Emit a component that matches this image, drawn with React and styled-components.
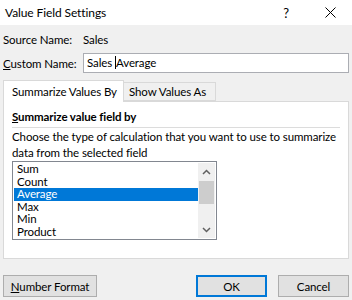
import React from 'react';
import styled, { createGlobalStyle } from 'styled-components';

const GlobalStyle = createGlobalStyle`
	html, body {
		margin: 0;
		padding: 0;
		background: #f0f0f0;
	}
	body {
		font-family: Lato, "Liberation Sans", sans-serif;
		font-size: 11.5px;
		letter-spacing: -0.1px;
		color: #000;
	}
`;

const Dialog = styled.div`
	width: 352px;
	height: 300px;
	background: #f0f0f0;
	display: flex;
	flex-direction: column;
	overflow: hidden;
`;

const TitleBar = styled.div`
	height: 25px;
	background: #fff;
	display: flex;
	align-items: center;
	padding-left: 5px;
`;

const Title = styled.div`
	flex: 1;
	font-size: 12px;
`;

const TitleButton = styled.div`
	width: 44px;
	height: 25px;
	display: flex;
	align-items: center;
	justify-content: center;
	font-size: 13px;
`;

const Body = styled.div`
	padding: 6px 3px 0 3px;
	display: flex;
	flex-direction: column;
`;

const Row = styled.div`
	display: flex;
	align-items: center;
	height: ${p => p.h || 20}px;
	margin-bottom: ${p => p.mb || 0}px;
	white-space: nowrap;
`;

const Label = styled.span`
	width: 80px;
	flex-shrink: 0;
`;

const U = styled.span`
	text-decoration: underline;
	text-underline-offset: 1px;
`;

const TextBox = styled.div`
	flex: 1;
	height: 20px;
	line-height: 18px;
	box-sizing: border-box;
	border: 1px solid #abadb3;
	background: #fff;
	padding-left: 3px;
`;

const Caret = styled.span`
	display: inline-block;
	width: 1px;
	height: 13px;
	background: #000;
	vertical-align: -2px;
`;

const Tabs = styled.div`
	display: flex;
	align-items: flex-end;
	height: 22px;
	position: relative;
	z-index: 1;
	white-space: nowrap;
`;

const Tab = styled.div`
	box-sizing: border-box;
	height: ${p => (p.active ? 22 : 19)}px;
	width: ${p => p.w}px;
	padding-left: ${p => (p.active ? 8 : 5)}px;
	border: 1px solid #d9d9d9;
	border-bottom: ${p => (p.active ? 'none' : '1px solid #d9d9d9')};
	margin-left: ${p => (p.active ? 0 : -1)}px;
	background: ${p => (p.active ? '#fff' : '#f0f0f0')};
	display: flex;
	align-items: center;
	margin-bottom: ${p => (p.active ? -1 : 0)}px;
`;

const Panel = styled.div`
	box-sizing: border-box;
	height: 158px;
	background: #fff;
	border: 1px solid #d9d9d9;
	padding: 6px 8px 0 8px;
`;

const Heading = styled.div`
	font-weight: bold;
	height: 17px;
	line-height: 17px;
	border-bottom: 1px solid #dcdcdc;
	padding-bottom: 2px;
	margin-bottom: 1px;
`;

const Desc = styled.div`
	line-height: 16px;
`;

const ListBox = styled.div`
	width: 205px;
	height: 79px;
	box-sizing: border-box;
	border: 1px solid #828790;
	display: flex;
	padding: 1px;
`;

const Items = styled.div`
	flex: 1;
	display: flex;
	flex-direction: column;
	padding-top: 0;
`;

const Item = styled.div`
	height: 12.6px;
	line-height: 12.6px;
	padding-left: 3px;
	background: ${p => (p.selected ? '#0078d7' : 'transparent')};
	color: ${p => (p.selected ? '#fff' : '#000')};
`;

const ScrollBar = styled.div`
	width: 17px;
	background: #f0f0f0;
	display: flex;
	flex-direction: column;
	align-items: center;
`;

const Arrow = styled.div`
	height: 17px;
	display: flex;
	align-items: center;
	justify-content: center;
`;

const Track = styled.div`
	flex: 1;
	width: 17px;
	padding-top: 1px;
`;

const Thumb = styled.div`
	width: 15px;
	margin: 0 auto;
	height: 23px;
	background: #cdcdcd;
`;

const Footer = styled.div`
	display: flex;
	align-items: center;
	margin-top: 16px;
	white-space: nowrap;
`;

const Button = styled.div`
	box-sizing: border-box;
	height: 22px;
	width: ${p => p.w || 71}px;
	margin-left: ${p => p.ml || 0}px;
	background: #e1e1e1;
	border: ${p => (p.primary ? '2px solid #0078d7' : '1px solid #adadad')};
	display: flex;
	align-items: center;
	justify-content: center;
`;

const Chevron = ({ up }) => (
	<svg width="9" height="6" viewBox="0 0 9 6">
		<path
			d={up ? 'M1 5 L4.5 1.5 L8 5' : 'M1 1 L4.5 4.5 L8 1'}
			fill="none"
			stroke="#606060"
			strokeWidth="1.5"
		/>
	</svg>
);

const items = ['Sum', 'Count', 'Average', 'Max', 'Min', 'Product'];

const App = () => {
	return (
		<Dialog>
			<GlobalStyle />
			<TitleBar>
				<Title>Value Field Settings</Title>
				<TitleButton>?</TitleButton>
				<TitleButton>
					<svg width="11" height="11" viewBox="0 0 11 11">
						<path d="M0.5 0.5 L10.5 10.5 M10.5 0.5 L0.5 10.5" stroke="#000" strokeWidth="1" />
					</svg>
				</TitleButton>
			</TitleBar>
			<Body>
				<Row h={16} mb={6}>
					<Label>Source Name:</Label>
					<span>Sales</span>
				</Row>
				<Row h={20} mb={6}>
					<Label><U>C</U>ustom Name:</Label>
					<TextBox>Sales <Caret />Average</TextBox>
				</Row>
				<Tabs>
					<Tab active w={121}>Summarize Values By</Tab>
					<Tab w={93}>Show Values As</Tab>
				</Tabs>
				<Panel>
					<Heading><U>S</U>ummarize value field by</Heading>
					<Desc>Choose the type of calculation that you want to use to summarize data from the selected field</Desc>
					<ListBox>
						<Items>
							{items.map(it => (
								<Item key={it} selected={it === 'Average'}>{it}</Item>
							))}
						</Items>
						<ScrollBar>
							<Arrow><Chevron up /></Arrow>
							<Track><Thumb /></Track>
							<Arrow><Chevron /></Arrow>
						</ScrollBar>
					</ListBox>
				</Panel>
				<Footer>
					<Button w={94}><U>N</U>umber Format</Button>
					<Button primary ml={99}>OK</Button>
					<Button ml={11}>Cancel</Button>
				</Footer>
			</Body>
		</Dialog>
	);
};

export default App;
